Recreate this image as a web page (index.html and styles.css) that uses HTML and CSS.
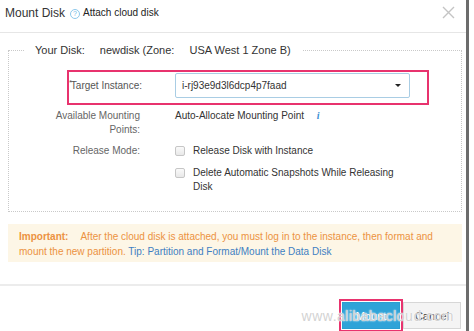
FILE: index.html
```html
<!DOCTYPE html>
<html lang="en">
<head>
    <meta charset="UTF-8">
    <meta name="viewport" content="width=device-width, initial-scale=1.0">
    <title>Mount Disk</title>
    <link rel="stylesheet" href="styles.css">
</head>
<body>
    <div class="dialog">
        <div class="header">
            <span class="title">Mount Disk</span>
            <span class="help">?</span>
            <span class="subtitle">Attach cloud disk</span>
            <svg class="close" width="13" height="13" viewBox="0 0 13 13">
                <path d="M1 1 L12 12 M12 1 L1 12" stroke="#c4c4c4" stroke-width="1.4" fill="none"/>
            </svg>
        </div>

        <fieldset class="disk-box">
            <legend>
                <span class="gap">Your Disk:</span>
                <span class="gap">newdisk (Zone:</span>
                <span>USA West 1 Zone B)</span>
            </legend>

            <div class="form-row highlight">
                <div class="form-label"><span class="req">*</span>Target Instance:</div>
                <div class="select">
                    <span>i-rj93e9d3l6dcp4p7faad</span>
                    <span class="caret"></span>
                </div>
            </div>

            <div class="form-row spaced">
                <div class="form-label">Available Mounting Points:</div>
                <div class="form-value">Auto-Allocate Mounting Point <span class="info">i</span></div>
            </div>

            <div class="form-row release">
                <div class="form-label">Release Mode:</div>
                <div class="form-value checks">
                    <label class="check"><span class="box"></span><span class="check-text">Release Disk with Instance</span></label>
                    <label class="check"><span class="box"></span><span class="check-text">Delete Automatic Snapshots While Releasing Disk</span></label>
                </div>
            </div>
        </fieldset>

        <div class="notice">
            <span class="notice-title">Important:</span>After the cloud disk is attached, you must log in to the instance, then format and mount the new partition. <a href="#">Tip: Partition and Format/Mount the Data Disk</a>
        </div>

        <div class="footer">
            <div class="mark"><button class="btn primary">Mount</button></div>
            <button class="btn">Cancel</button>
            <span class="watermark">www.alibabacloud.com</span>
        </div>
    </div>
</body>
</html>
```

FILE: styles.css
```css
body {
    margin: 0;
    background: #fff;
    font-family: "Liberation Sans", Arial, sans-serif;
    color: #333;
}
.dialog {
    width: 466px;
    height: 331px;
    border-right: 3px solid #6c6c6c;
    position: relative;
    overflow: hidden;
}
.header {
    height: 33px;
    border-bottom: 1px solid #e6e6e6;
    display: flex;
    align-items: flex-start;
    padding: 6px 11px 0 5px;
    box-sizing: border-box;
}
.title {
    font-size: 12px;
    line-height: 14px;
    color: #333;
}
.help {
    width: 8px;
    height: 8px;
    margin: 3px 0 0 5px;
    border: 1px solid #8cc8ec;
    border-radius: 50%;
    color: #6cb8e6;
    font-size: 7px;
    line-height: 8px;
    text-align: center;
}
.subtitle {
    font-size: 10px;
    line-height: 14px;
    margin-left: 3px;
    color: #222;
}
.close {
    margin-left: auto;
}
.disk-box {
    margin: 10px 0 0 8px;
    width: 454px;
    box-sizing: border-box;
    border: 1px dotted #c9c9c9;
    padding: 13px 0 17px 0;
}
.disk-box legend {
    margin-left: 15px;
    padding: 0 11px;
    font-size: 11px;
    line-height: 14px;
    color: #333;
}
.gap {
    margin-right: 12px;
}
.form-row {
    display: flex;
    gap: 35px;
    padding-left: 31px;
    font-size: 10px;
    line-height: 14px;
}
.form-label {
    width: 100px;
    text-align: right;
    color: #666;
}
.form-value {
    width: 235px;
    color: #333;
}
.highlight {
    margin-left: 58px;
    width: 362px;
    box-sizing: border-box;
    padding: 1px 0 5px 0;
    gap: 33px;
    border: 2px solid #e8336e;
    align-items: center;
}
.highlight .form-label {
    width: 73px;
    white-space: nowrap;
    color: #555;
    position: relative;
}
.req {
    position: absolute;
    left: 0;
    top: -3px;
    font-size: 8px;
    color: #555;
}
.select {
    width: 235px;
    height: 25px;
    box-sizing: border-box;
    border: 1px solid #a9cde4;
    border-radius: 2px;
    display: flex;
    align-items: center;
    justify-content: space-between;
    padding: 0 8px 0 6px;
    font-size: 10px;
    color: #333;
}
.caret {
    width: 0;
    height: 0;
    border-left: 3px solid transparent;
    border-right: 3px solid transparent;
    border-top: 3px solid #222;
}
.spaced {
    margin-top: 4px;
}
.info {
    color: #3b8fd3;
    font-style: italic;
    font-weight: bold;
    font-family: "Liberation Serif", serif;
    margin-left: 10px;
}
.release {
    margin-top: 7px;
}
.checks {
    display: flex;
    flex-direction: column;
    gap: 8px;
}
.check {
    display: flex;
    align-items: flex-start;
    gap: 8px;
}
.box {
    width: 8px;
    height: 8px;
    margin-top: 2px;
    border: 1px solid #c6c6c6;
    border-radius: 2px;
    background: linear-gradient(#fafafa, #e8e8e8);
    flex-shrink: 0;
}
.check-text {
    max-width: 205px;
}
.notice {
    margin: 12px 0 0 8px;
    width: 454px;
    box-sizing: border-box;
    background: #fdf6e6;
    padding: 5px 11px 3px 11px;
    font-size: 10px;
    line-height: 15px;
    color: #ec9241;
}
.notice-title {
    font-weight: bold;
    margin-right: 12px;
}
.notice a {
    color: #3d7fc2;
    text-decoration: none;
}
.footer {
    margin-top: 22px;
    border-top: 2px solid #ececec;
    padding: 13px 5px 0 0;
    display: flex;
    justify-content: flex-end;
    align-items: flex-start;
}
.mark {
    border: 2px solid #e8336e;
    padding: 1px;
}
.btn {
    width: 58px;
    height: 27px;
    margin-top: 3px;
    border: 1px solid #d7d7d7;
    background: #f4f4f4;
    color: #333;
    font-family: "Liberation Sans", Arial, sans-serif;
    font-size: 11px;
    padding: 0;
}
.btn.primary {
    margin-top: 0;
    display: block;
    border-color: #2a9ed2;
    background: #2fa3d8;
    color: #fff;
}
.watermark {
    position: absolute;
    right: 12px;
    bottom: 7px;
    font-size: 14px;
    letter-spacing: 0.5px;
    color: rgba(190, 190, 190, 0.7);
    text-shadow: 0 0 2px #fff, 0 0 1px #fff;
    pointer-events: none;
}
```
